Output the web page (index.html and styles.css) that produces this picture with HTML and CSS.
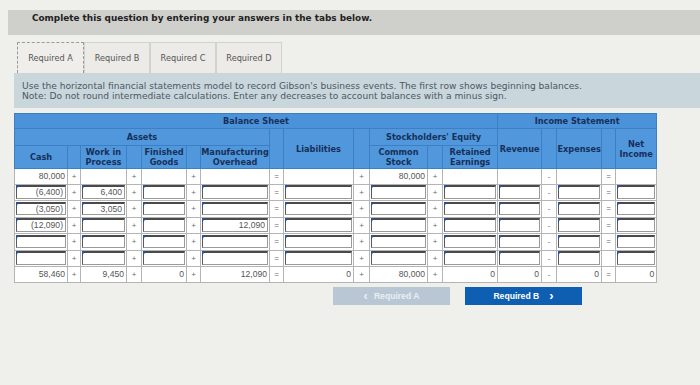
FILE: index.html
```html
<!DOCTYPE html>
<html>
<head>
<meta charset="utf-8">
<link rel="stylesheet" href="styles.css">
</head>
<body>
<div class="page">
  <div class="topbar">Complete this question by entering your answers in the tabs below.</div>
  <div class="tabs">
    <div class="tab active">Required A</div>
    <div class="tab">Required B</div>
    <div class="tab">Required C</div>
    <div class="tab">Required D</div>
  </div>
  <div class="panel">
    <p>Use the horizontal financial statements model to record Gibson's business events. The first row shows beginning balances.</p>
    <p>Note: Do not round intermediate calculations. Enter any decreases to account balances with a minus sign.</p>
  </div>
  <table class="model">
    <colgroup>
      <col style="width:53px"><col style="width:13px"><col style="width:46px"><col style="width:15px"><col style="width:45px"><col style="width:14px"><col style="width:69px"><col style="width:14px"><col style="width:70px"><col style="width:16px"><col style="width:58px"><col style="width:15px"><col style="width:55px"><col style="width:44px"><col style="width:15px"><col style="width:45px"><col style="width:14px"><col style="width:41px">
    </colgroup>
    <thead>
      <tr class="r1">
        <th colspan="13">Balance Sheet</th>
        <th colspan="5">Income Statement</th>
      </tr>
      <tr class="r2">
        <th colspan="7">Assets</th>
        <th rowspan="2"></th>
        <th rowspan="2">Liabilities</th>
        <th rowspan="2"></th>
        <th colspan="3">Stockholders' Equity</th>
        <th rowspan="2">Revenue</th>
        <th rowspan="2"></th>
        <th rowspan="2">Expenses</th>
        <th rowspan="2"></th>
        <th rowspan="2">Net<br>Income</th>
      </tr>
      <tr class="r3">
        <th>Cash</th><th></th>
        <th>Work in<br>Process</th><th></th>
        <th>Finished<br>Goods</th><th></th>
        <th>Manufacturing<br>Overhead</th>
        <th>Common<br>Stock</th><th></th>
        <th>Retained<br>Earnings</th>
      </tr>
    </thead>
    <tbody>
      <tr class="plain">
        <td class="v">80,000</td><td class="op">+</td>
        <td class="v"></td><td class="op">+</td>
        <td class="v"></td><td class="op">+</td>
        <td class="v"></td><td class="op">=</td>
        <td class="v"></td><td class="op">+</td>
        <td class="v">80,000</td><td class="op">+</td>
        <td class="v"></td>
        <td class="v"></td><td class="op">-</td>
        <td class="v"></td><td class="op">=</td>
        <td class="v"></td>
      </tr>
      <tr>
        <td class="in"><div class="box">(6,400)</div></td><td class="op">+</td>
        <td class="in"><div class="box">6,400</div></td><td class="op">+</td>
        <td class="in"><div class="box"></div></td><td class="op">+</td>
        <td class="in"><div class="box"></div></td><td class="op">=</td>
        <td class="in"><div class="box"></div></td><td class="op">+</td>
        <td class="in"><div class="box"></div></td><td class="op">+</td>
        <td class="in"><div class="box"></div></td>
        <td class="in"><div class="box"></div></td><td class="op">-</td>
        <td class="in"><div class="box"></div></td><td class="op">=</td>
        <td class="in"><div class="box"></div></td>
      </tr>
      <tr>
        <td class="in"><div class="box">(3,050)</div></td><td class="op">+</td>
        <td class="in"><div class="box">3,050</div></td><td class="op">+</td>
        <td class="in"><div class="box"></div></td><td class="op">+</td>
        <td class="in"><div class="box"></div></td><td class="op">=</td>
        <td class="in"><div class="box"></div></td><td class="op">+</td>
        <td class="in"><div class="box"></div></td><td class="op">+</td>
        <td class="in"><div class="box"></div></td>
        <td class="in"><div class="box"></div></td><td class="op">-</td>
        <td class="in"><div class="box"></div></td><td class="op">=</td>
        <td class="in"><div class="box"></div></td>
      </tr>
      <tr>
        <td class="in"><div class="box">(12,090)</div></td><td class="op">+</td>
        <td class="in"><div class="box"></div></td><td class="op">+</td>
        <td class="in"><div class="box"></div></td><td class="op">+</td>
        <td class="in"><div class="box">12,090</div></td><td class="op">=</td>
        <td class="in"><div class="box"></div></td><td class="op">+</td>
        <td class="in"><div class="box"></div></td><td class="op">+</td>
        <td class="in"><div class="box"></div></td>
        <td class="in"><div class="box"></div></td><td class="op">-</td>
        <td class="in"><div class="box"></div></td><td class="op">=</td>
        <td class="in"><div class="box"></div></td>
      </tr>
      <tr>
        <td class="in"><div class="box"></div></td><td class="op">+</td>
        <td class="in"><div class="box"></div></td><td class="op">+</td>
        <td class="in"><div class="box"></div></td><td class="op">+</td>
        <td class="in"><div class="box"></div></td><td class="op">=</td>
        <td class="in"><div class="box"></div></td><td class="op">+</td>
        <td class="in"><div class="box"></div></td><td class="op">+</td>
        <td class="in"><div class="box"></div></td>
        <td class="in"><div class="box"></div></td><td class="op">-</td>
        <td class="in"><div class="box"></div></td><td class="op">=</td>
        <td class="in"><div class="box"></div></td>
      </tr>
      <tr>
        <td class="in"><div class="box"></div></td><td class="op">+</td>
        <td class="in"><div class="box"></div></td><td class="op">+</td>
        <td class="in"><div class="box"></div></td><td class="op">+</td>
        <td class="in"><div class="box"></div></td><td class="op">=</td>
        <td class="in"><div class="box"></div></td><td class="op">+</td>
        <td class="in"><div class="box"></div></td><td class="op">+</td>
        <td class="in"><div class="box"></div></td>
        <td class="in"><div class="box"></div></td><td class="op">-</td>
        <td class="in"><div class="box"></div></td><td class="op"></td>
        <td class="in"><div class="box"></div></td>
      </tr>
      <tr class="plain total">
        <td class="v">58,460</td><td class="op">+</td>
        <td class="v">9,450</td><td class="op">+</td>
        <td class="v">0</td><td class="op">+</td>
        <td class="v">12,090</td><td class="op">=</td>
        <td class="v">0</td><td class="op">+</td>
        <td class="v">80,000</td><td class="op">+</td>
        <td class="v">0</td>
        <td class="v">0</td><td class="op">-</td>
        <td class="v">0</td><td class="op">=</td>
        <td class="v">0</td>
      </tr>
    </tbody>
  </table>
  <div class="nav">
    <div class="btn prev"><span class="chev">&lsaquo;</span> Required A</div>
    <div class="btn next">Required B <span class="chev">&rsaquo;</span></div>
  </div>
</div>
</body>
</html>
```

FILE: styles.css
```css
html, body {
  margin: 0;
  padding: 0;
  background: #efefec;
}
.page {
  width: 700px;
  height: 385px;
  overflow: hidden;
  font-family: "DejaVu Sans", Verdana, sans-serif;
}
.topbar {
  margin: 10px 0 0 8px;
  height: 25px;
  box-sizing: border-box;
  padding: 3px 0 0 24px;
  background: #cfcfcb;
  color: #222;
  font-weight: bold;
  font-size: 8.9px;
  line-height: 10px;
}
.tabs {
  display: flex;
  margin: 7px 0 0 17px;
  height: 31px;
}
.tab {
  box-sizing: border-box;
  width: 66px;
  height: 31px;
  border: 1px solid #d2d2cf;
  border-bottom: none;
  background: #ecebe7;
  color: #555;
  font-size: 8.2px;
  display: flex;
  align-items: center;
  justify-content: center;
}
.tab.active {
  width: 67px;
  border: 1px dashed #9a9a9a;
  border-bottom: none;
  background: #efeeea;
}
.panel {
  margin-left: 14px;
  height: 35px;
  box-sizing: border-box;
  padding: 8px 0 0 8px;
  background: #c9d6dc;
  color: #4b5864;
  font-size: 9.1px;
  line-height: 10px;
}
.panel p {
  margin: 0;
  white-space: nowrap;
}
.model {
  margin: 5px 0 0 14px;
  border-collapse: collapse;
  table-layout: fixed;
  width: 642px;
  background: #fff;
}
.model th {
  background: #5197dc;
  color: #17305a;
  font-weight: bold;
  font-size: 8.2px;
  line-height: 10px;
  border: 1px solid #3d7fc4;
  padding: 0;
  text-align: center;
  vertical-align: middle;
  overflow: hidden;
  white-space: nowrap;
}
.model tr.r1 th { height: 14px; background: #4b92d9; }
.model tr.r2 th { height: 16px; }
.model tr.r3 th { height: 22px; }
.model td {
  height: 14.5px;
  padding: 0;
  border: 1px solid #b4b4b4;
  font-family: "Liberation Sans", Arial, sans-serif;
  font-size: 8.6px;
  color: #555;
  overflow: hidden;
  white-space: nowrap;
}
.model td.v {
  text-align: right;
  padding-right: 2px;
}
.model td.op {
  text-align: center;
  color: #6a6a6a;
  font-size: 8px;
}
.model td.in {
  padding: 0 1px 1px 1px;
}
.box {
  position: relative;
  height: 13.5px;
  box-sizing: border-box;
  border-top: 2px solid #4a4a4a;
  border-left: 1px solid #5a5a5a;
  border-right: 1px solid #9a9a9a;
  border-bottom: 1px solid #9a9a9a;
  line-height: 10px;
  text-align: right;
  padding-right: 2px;
  background: #fff;
}
.box::before {
  content: "";
  position: absolute;
  left: -1px;
  top: -2px;
  border-top: 5px solid #25549a;
  border-right: 3px solid transparent;
}
.nav {
  display: flex;
  margin: 4px 0 0 333px;
  gap: 15px;
}
.btn {
  width: 117px;
  height: 18px;
  display: flex;
  align-items: center;
  justify-content: center;
  font-family: "Liberation Sans", Arial, sans-serif;
  font-weight: bold;
  font-size: 8.6px;
}
.btn.prev {
  background: #b9c7d5;
  color: #e8eef4;
}
.btn.next {
  background: #0e5eb1;
  color: #fff;
}
.chev {
  font-size: 13px;
  line-height: 10px;
  margin: 0 6px;
}
.btn.prev .chev { margin-left: 0; }
.btn.next .chev { margin-right: 0; margin-left: 10px; }
```
